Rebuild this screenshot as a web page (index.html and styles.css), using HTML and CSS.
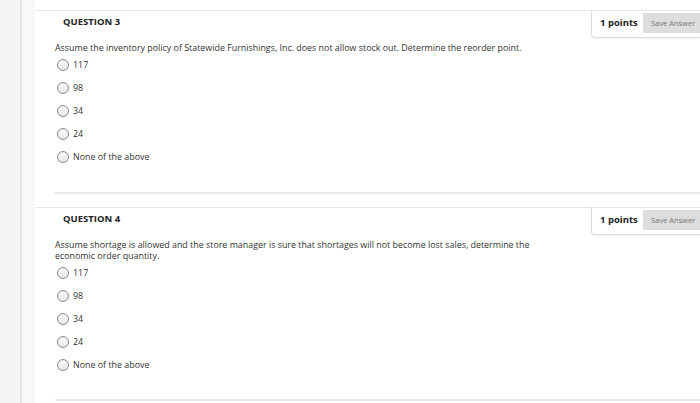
FILE: index.html
```html
<!DOCTYPE html>
<html lang="en">
<head>
<meta charset="utf-8">
<title>Quiz</title>
<link rel="stylesheet" href="styles.css">
</head>
<body>
<div class="page">
  <div class="rail"></div>
  <div class="gutter"></div>
  <main class="content">
    <section class="question">
      <div class="q-head">
        <h3 class="q-title">QUESTION 3</h3>
        <div class="points-box">
          <span class="points">1 points</span>
          <button class="save-btn">Save Answer</button>
        </div>
      </div>
      <div class="q-body">
        <p class="q-text">Assume the inventory policy of Statewide Furnishings, Inc. does not allow stock out. Determine the reorder point.</p>
        <ul class="options">
          <li class="option"><span class="radio"></span><span class="opt-label">117</span></li>
          <li class="option"><span class="radio"></span><span class="opt-label">98</span></li>
          <li class="option"><span class="radio"></span><span class="opt-label">34</span></li>
          <li class="option"><span class="radio"></span><span class="opt-label">24</span></li>
          <li class="option"><span class="radio"></span><span class="opt-label">None of the above</span></li>
        </ul>
        <div class="divider"></div>
      </div>
    </section>
    <section class="question q4">
      <div class="q-head">
        <h3 class="q-title">QUESTION 4</h3>
        <div class="points-box">
          <span class="points">1 points</span>
          <button class="save-btn">Save Answer</button>
        </div>
      </div>
      <div class="q-body">
        <p class="q-text">Assume shortage is allowed and the store manager is sure that shortages will not become lost sales, determine the economic order quantity.</p>
        <ul class="options">
          <li class="option"><span class="radio"></span><span class="opt-label">117</span></li>
          <li class="option"><span class="radio"></span><span class="opt-label">98</span></li>
          <li class="option"><span class="radio"></span><span class="opt-label">34</span></li>
          <li class="option"><span class="radio"></span><span class="opt-label">24</span></li>
          <li class="option"><span class="radio"></span><span class="opt-label">None of the above</span></li>
        </ul>
        <div class="divider last"></div>
      </div>
    </section>
  </main>
</div>
</body>
</html>
```
FILE: styles.css
```css
html, body {
  margin: 0;
  padding: 0;
  background: #ffffff;
}
body {
  font-family: "Open Sans", "Liberation Sans", sans-serif;
  color: #333333;
  overflow: hidden;
}
.page {
  display: flex;
  height: 403px;
}
.rail {
  width: 20px;
  background: #f4f4f4;
  border-right: 2px solid #e4e4e4;
}
.gutter {
  width: 13px;
  background: #f8f8f8;
}
.content {
  flex: 1;
  padding-top: 10px;
  background: #ffffff;
}
.question {
  border-top: 1px solid #e6e6e6;
}
.q-head {
  display: flex;
  justify-content: space-between;
  align-items: flex-start;
  height: 26px;
}
.q-title {
  margin: 0;
  padding: 4px 0 0 28px;
  font-size: 9.5px;
  line-height: 13px;
  font-weight: 700;
  color: #222222;
}
.points-box {
  display: flex;
  align-items: flex-start;
  height: 26px;
  margin-top: -1px;
  padding: 0 0 0 8px;
  border-left: 1px solid #dddddd;
  border-bottom: 1px solid #dddddd;
  border-top: 1px solid #e6e6e6;
  border-bottom-left-radius: 4px;
  box-shadow: 0 1px 2px rgba(0, 0, 0, 0.06);
  background: #ffffff;
}
.points {
  width: 43px;
  margin-top: 2px;
  line-height: 20px;
  font-size: 9.5px;
  font-weight: 700;
  color: #222222;
  white-space: nowrap;
}
.save-btn {
  height: 20px;
  width: 57px;
  margin-top: 2px;
  padding: 0 0 0 8px;
  border: none;
  background: #dddddd;
  color: #777777;
  font-family: "Open Sans", "Liberation Sans", sans-serif;
  font-size: 7.5px;
  text-align: left;
  white-space: nowrap;
  overflow: hidden;
}
.q-body {
  padding-left: 20px;
}
.q-text {
  margin: 5px 0 0 0;
  width: 490px;
  font-size: 8.9px;
  line-height: 11px;
  color: #333333;
}
.options {
  list-style: none;
  margin: 0;
  padding: 0;
}
.option {
  display: flex;
  align-items: center;
  height: 23px;
  padding-left: 2px;
}
.radio {
  width: 10px;
  height: 10px;
  border-radius: 50%;
  border: 1px solid #8c8c8c;
  background: linear-gradient(#ffffff, #e6e6e6);
  box-shadow: inset 0 1px 1px rgba(0, 0, 0, 0.08);
  margin-right: 4px;
  flex: none;
}
.opt-label {
  font-size: 8.9px;
  color: #333333;
}
.divider {
  height: 2px;
  margin-top: 24px;
  margin-bottom: 13px;
  background: #e8e8e8;
}
.divider.last {
  margin-top: 23px;
}
```
